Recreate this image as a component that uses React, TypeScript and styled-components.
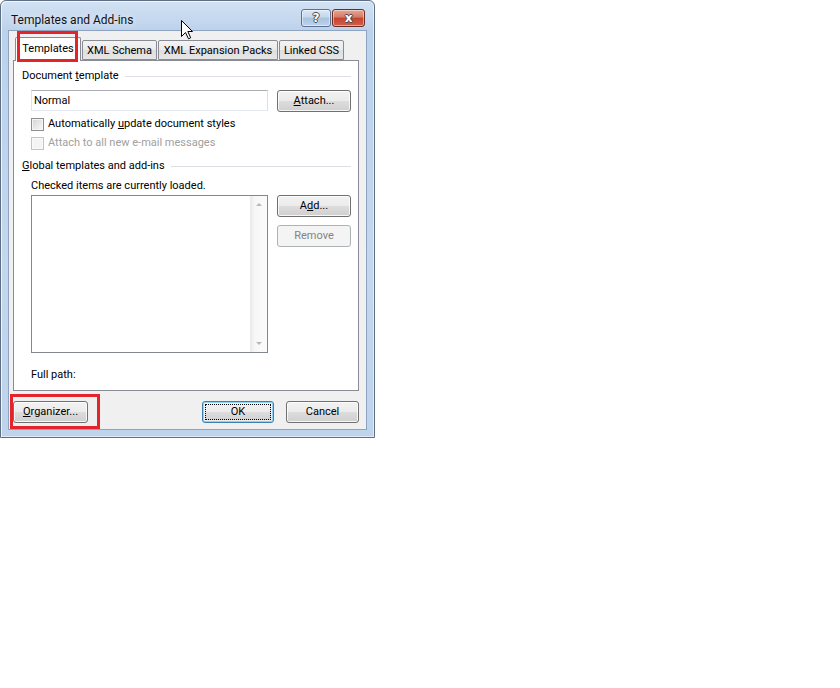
import React from 'react'
import styled, { createGlobalStyle } from 'styled-components'

const GlobalStyle = createGlobalStyle`
  html, body {
    margin: 0;
    padding: 0;
    background: #ffffff;
  }
  body {
    font-family: Roboto, 'Noto Sans', sans-serif;
    font-size: 11px;
    color: #000;
  }
`;

const Page = styled.div`
  position: relative;
  width: 840px;
  height: 688px;
`;

const Window = styled.div`
  width: 375px;
  height: 438px;
  box-sizing: border-box;
  border: 1px solid #5f6f84;
  border-radius: 6px 6px 0 0;
  background: linear-gradient(#d3e2f4, #bcd2eb 30px, #c3d7ee 60%, #bed4ec);
  box-shadow: inset 1px 1px 0 rgba(255, 255, 255, 0.7), inset -1px -1px 0 rgba(255, 255, 255, 0.5);
  display: flex;
  flex-direction: column;
  padding: 0 7px 7px 7px;
`;

const TitleBar = styled.div`
  height: 29px;
  display: flex;
  align-items: flex-start;
`;

const Title = styled.div`
  flex: 1;
  padding: 11px 0 0 3px;
  font-size: 12px;
  line-height: 16px;
  color: #111;
  text-shadow: 0 0 6px rgba(255, 255, 255, 0.9);
`;

const CaptionButton = styled.div<{ $close?: boolean; $w: number }>`
  width: ${p => p.$w}px;
  height: 18px;
  margin-top: 8px;
  box-sizing: border-box;
  border: 1px solid ${p => (p.$close ? '#6d2c22' : '#5a7394')};
  border-radius: 3px;
  background: ${p =>
    p.$close
      ? 'linear-gradient(#e8a596, #d67a66 45%, #c5432d 50%, #d0604a)'
      : 'linear-gradient(#dbe7f5, #c5d7ec 45%, #a9c2df 50%, #bfd3ea)'};
  box-shadow: inset 0 0 0 1px rgba(255, 255, 255, 0.45);
  display: flex;
  align-items: center;
  justify-content: center;
  color: #fff;
  font-family: 'DejaVu Sans', sans-serif;
  font-weight: bold;
  font-size: 12px;
  line-height: 1;
  text-shadow: -1px 0 #3d4c60, 1px 0 #3d4c60, 0 -1px #3d4c60, 0 1px #3d4c60;
`;

const CloseGap = styled.div`
  width: 1px;
`;

const Client = styled.div`
  flex: 1;
  border: 1px solid #8da3bf;
  background: #f0f0f0;
  display: flex;
  flex-direction: column;
  padding: 5px 7px 0 4px;
`;

const TabStrip = styled.div`
  height: 24px;
  display: flex;
  align-items: flex-end;
  padding-left: 2px;
  position: relative;
  z-index: 1;
`;

const Tab = styled.div<{ $active?: boolean; $w: number }>`
  width: ${p => p.$w}px;
  box-sizing: border-box;
  height: ${p => (p.$active ? 24 : 20)}px;
  margin: ${p => (p.$active ? '0 1px -1px 0' : '0 1px 0 0')};
  border: 1px solid #898c95;
  border-bottom: ${p => (p.$active ? 'none' : '1px solid #898c95')};
  border-radius: 2px 2px 0 0;
  background: ${p =>
    p.$active ? '#ffffff' : 'linear-gradient(#f3f3f3, #ebebeb 50%, #dedede 50%, #e6e6e6)'};
  display: flex;
  align-items: center;
  justify-content: center;
  padding-bottom: ${p => (p.$active ? 2 : 0)}px;
  padding-top: ${p => (p.$active ? 0 : 1)}px;
  white-space: nowrap;
  line-height: 16px;
`;

const Panel = styled.div`
  height: 331px;
  box-sizing: border-box;
  border: 1px solid #898c95;
  background: #ffffff;
  display: flex;
  flex-direction: column;
  padding: 0 7px 0 8px;
`;

const GroupHeader = styled.div<{ $top: number }>`
  margin-top: ${p => p.$top}px;
  height: 16px;
  line-height: 16px;
  display: flex;
  align-items: center;
  gap: 6px;
  white-space: nowrap;
  &::after {
    content: '';
    flex: 1;
    height: 1px;
    background: #dcdfe3;
  }
`;

const Row = styled.div<{ $top: number }>`
  margin-top: ${p => p.$top}px;
  display: flex;
  align-items: flex-start;
  gap: 9px;
  padding-left: 9px;
`;

const TextBox = styled.div`
  width: 237px;
  height: 21px;
  box-sizing: border-box;
  border: 1px solid #abadb3;
  border-color: #abadb3 #dbdfe6 #e3e9ef #e2e3ea;
  padding: 0 2px;
  line-height: 19px;
`;

const Button = styled.div<{ $disabled?: boolean; $default?: boolean; $w?: number }>`
  width: ${p => p.$w ?? 74}px;
  height: 22px;
  box-sizing: border-box;
  border: 1px solid ${p => (p.$disabled ? '#adb2b5' : p.$default ? '#3c7fb1' : '#707070')};
  border-radius: 3px;
  background: ${p =>
    p.$disabled
      ? '#f4f4f4'
      : 'linear-gradient(#f2f2f2, #ebebeb 50%, #dddddd 50%, #cfcfcf)'};
  box-shadow: ${p =>
    p.$disabled
      ? 'none'
      : p.$default
      ? 'inset 0 0 0 1px #8fd3f5, inset 0 0 0 2px rgba(255, 255, 255, 0.6)'
      : 'inset 0 0 0 1px rgba(255, 255, 255, 0.8)'};
  color: ${p => (p.$disabled ? '#838383' : '#000')};
  display: flex;
  align-items: center;
  justify-content: center;
  line-height: 16px;
  position: relative;
`;

const FocusRect = styled.div`
  position: absolute;
  inset: 2px;
  border: 1px dotted #000;
`;

const CheckRow = styled.div<{ $top: number; $disabled?: boolean }>`
  margin-top: ${p => p.$top}px;
  padding-left: 9px;
  height: 16px;
  display: flex;
  align-items: center;
  gap: 4px;
  color: ${p => (p.$disabled ? '#a0a0a0' : '#000')};
  line-height: 16px;
`;

const CheckBox = styled.div<{ $disabled?: boolean }>`
  width: 13px;
  height: 13px;
  box-sizing: border-box;
  border: 1px solid ${p => (p.$disabled ? '#c4c4c4' : '#8e8f8f')};
  background: ${p =>
    p.$disabled ? '#f4f4f4' : 'linear-gradient(135deg, #d3d3d3, #eeeeee 70%, #fbfbfb)'};
  box-shadow: inset 0 0 0 1px ${p => (p.$disabled ? '#fafafa' : '#f4f4f4')};
`;

const Label = styled.div<{ $top: number }>`
  margin-top: ${p => p.$top}px;
  padding-left: 9px;
  height: 16px;
  line-height: 16px;
`;

const ListBox = styled.div`
  width: 237px;
  height: 158px;
  box-sizing: border-box;
  border: 1px solid #828790;
  background: #fff;
  display: flex;
  justify-content: flex-end;
`;

const ScrollBar = styled.div`
  width: 16px;
  background: linear-gradient(90deg, #eaeaea, #f7f7f7 20%, #fbfbfb);
  border-left: 1px solid #ececec;
  display: flex;
  flex-direction: column;
  justify-content: space-between;
  align-items: center;
  padding: 7px 0;
`;

const Arrow = styled.div<{ $down?: boolean }>`
  width: 0;
  height: 0;
  border-left: 3px solid transparent;
  border-right: 3px solid transparent;
  ${p => (p.$down ? 'border-top: 3px solid #b8b8b8;' : 'border-bottom: 3px solid #b8b8b8;')}
`;

const ButtonColumn = styled.div`
  display: flex;
  flex-direction: column;
  gap: 8px;
`;

const Footer = styled.div`
  margin-top: 10px;
  display: flex;
  align-items: center;
  gap: 12px;
`;

const Spacer = styled.div`
  flex: 1;
`;

const RedBox = styled.div<{ $x: number; $y: number; $w: number; $h: number }>`
  position: absolute;
  z-index: 10;
  left: ${p => p.$x}px;
  top: ${p => p.$y}px;
  width: ${p => p.$w}px;
  height: ${p => p.$h}px;
  box-sizing: border-box;
  border: 3px solid #e3242b;
  pointer-events: none;
`;

const Cursor = styled.svg`
  position: absolute;
  z-index: 11;
  left: 181px;
  top: 20px;
`;

export default function App() {
  return (
    <Page>
      <GlobalStyle />
      <Window>
        <TitleBar>
          <Title>Templates and Add-ins</Title>
          <CaptionButton $w={30}>?</CaptionButton>
          <CloseGap />
          <CaptionButton $close $w={33}>x</CaptionButton>
          <CloseGap />
          <CloseGap />
        </TitleBar>
        <Client>
          <TabStrip>
            <Tab $active $w={66}>Templates</Tab>
            <Tab $w={75}>XML Schema</Tab>
            <Tab $w={120}>XML Expansion Packs</Tab>
            <Tab $w={65}>Linked CSS</Tab>
          </TabStrip>
          <Panel>
            <GroupHeader $top={7}>
              <span>Document <u>t</u>emplate</span>
            </GroupHeader>
            <Row $top={6}>
              <TextBox>Normal</TextBox>
              <Button><span><u>A</u>ttach...</span></Button>
            </Row>
            <CheckRow $top={4}>
              <CheckBox />
              <span>Automatically <u>u</u>pdate document styles</span>
            </CheckRow>
            <CheckRow $top={3} $disabled>
              <CheckBox $disabled />
              <span>Attach to all new e-mail messages</span>
            </CheckRow>
            <GroupHeader $top={7}>
              <span><u>G</u>lobal templates and add-ins</span>
            </GroupHeader>
            <Label $top={4}>Checked items are currently loaded.</Label>
            <Row $top={1}>
              <ListBox>
                <ScrollBar>
                  <Arrow />
                  <Arrow $down />
                </ScrollBar>
              </ListBox>
              <ButtonColumn>
                <Button><span>A<u>d</u>d...</span></Button>
                <Button $disabled>Remove</Button>
              </ButtonColumn>
            </Row>
            <Label $top={14}>Full path:</Label>
          </Panel>
          <Footer>
            <Button $w={75}><span><u>O</u>rganizer...</span></Button>
            <Spacer />
            <Button $default $w={72}>
              <FocusRect />
              OK
            </Button>
            <Button $w={73}>Cancel</Button>
          </Footer>
        </Client>
      </Window>
      <RedBox $x={17} $y={31} $w={61} $h={31} />
      <RedBox $x={10} $y={394} $w={90} $h={35} />
      <Cursor width="13" height="20" viewBox="0 0 13 20">
        <path d="M0.5 0.5 L0.5 16.5 L4.5 12.5 L7.5 18.8 L9.7 17.8 L6.8 11.5 L11.5 11.5 Z" fill="#fff" stroke="#000" strokeWidth="1" />
      </Cursor>
    </Page>
  )
}
